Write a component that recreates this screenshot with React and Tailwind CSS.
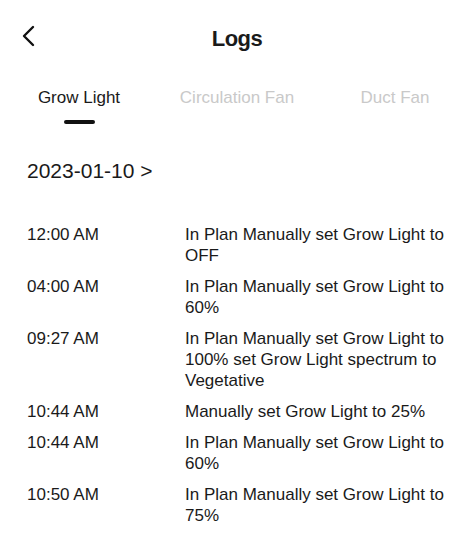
import React from "react";

const logs = [
  { time: "12:00 AM", text: "In Plan Manually set Grow Light to OFF" },
  { time: "04:00 AM", text: "In Plan Manually set Grow Light to 60%" },
  {
    time: "09:27 AM",
    text: "In Plan Manually set Grow Light to 100% set Grow Light spectrum to Vegetative",
  },
  { time: "10:44 AM", text: "Manually set Grow Light to 25%" },
  { time: "10:44 AM", text: "In Plan Manually set Grow Light to 60%" },
  { time: "10:50 AM", text: "In Plan Manually set Grow Light to 75%" },
];

const tabs = ["Grow Light", "Circulation Fan", "Duct Fan"];

const App = () => {
  return (
    <div className="w-[474px] h-[551px] bg-white text-[#1a1a1a] font-['Liberation_Sans',sans-serif] overflow-hidden">
      {/* header */}
      <div className="relative h-[76px] flex items-center justify-center">
        <button className="absolute left-[19px] top-[24px] w-[18px] h-[24px] flex items-center justify-center">
          <svg width="14" height="22" viewBox="0 0 14 22" fill="none">
            <path d="M12 2 L3 11 L12 20" stroke="#111" strokeWidth="2.4" strokeLinecap="round" strokeLinejoin="round" />
          </svg>
        </button>
        <h1 className="text-[22px] font-bold tracking-tight">Logs</h1>
      </div>

      {/* tabs */}
      <div className="grid grid-cols-3 pt-[12px]">
        {tabs.map((tab, i) => (
          <div key={tab} className="flex flex-col items-center">
            <span className={`text-[17px] leading-[20px] ${i === 0 ? "text-[#1a1a1a]" : "text-[#c9c9c9]"}`}>
              {tab}
            </span>
            <span className={`mt-[12px] h-[4px] w-[31px] rounded-full ${i === 0 ? "bg-[#111]" : "bg-transparent"}`} />
          </div>
        ))}
      </div>

      {/* date */}
      <div className="px-[27px] mt-[35px] text-[21px] leading-[24px]">2023-01-10 &gt;</div>

      {/* list */}
      <div className="pl-[27px] pr-[16px] mt-[41px] flex flex-col gap-[10px]">
        {logs.map((log, i) => (
          <div key={i} className="flex text-[17px] leading-[21px]">
            <div className="w-[158px] shrink-0">{log.time}</div>
            <div className="flex-1">{log.text}</div>
          </div>
        ))}
      </div>
    </div>
  );
};

export default App;
